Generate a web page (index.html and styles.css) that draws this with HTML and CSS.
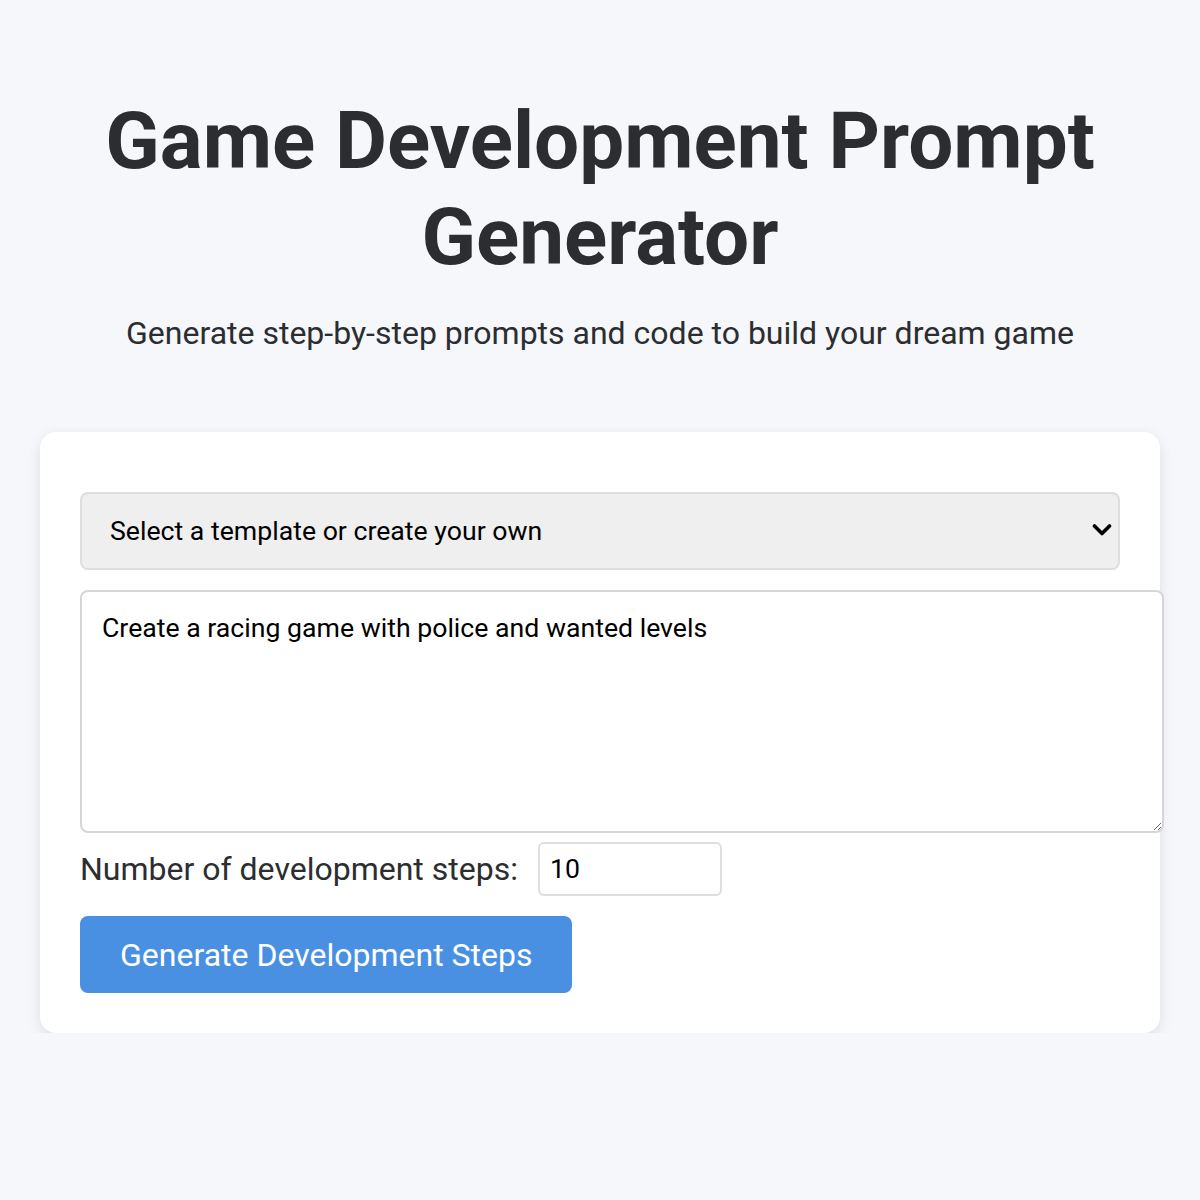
FILE: index.html
```html
<!DOCTYPE html>
<html lang="en">
<head>
<meta charset="UTF-8" />
<meta name="viewport" content="width=device-width, initial-scale=1" />
<title>Game Development Prompt Generator</title>
<link rel="stylesheet" href="styles.css">
</head>
<body>
  <div class="container">
    <header class="header">
      <h1>Game Development Prompt Generator</h1>
      <p class="subtitle">Generate step-by-step prompts and code to build your dream game</p>
    </header>

    <div class="card">
      <div class="select-wrap">
        <select id="templateSelect" class="template-select">
          <option value="">Select a template or create your own</option>
          <option value="racing">Racing game</option>
          <option value="platformer">Platformer</option>
          <option value="rpg">RPG</option>
        </select>
        <!-- dropdown arrow -->
        <svg class="select-arrow" width="20" height="14" viewBox="0 0 20 14">
          <path d="M2.5 3 L10 10.5 L17.5 3" fill="none" stroke="#000" stroke-width="3.6" stroke-linecap="round" stroke-linejoin="round" />
        </svg>
      </div>

      <textarea id="gameIdea" class="game-idea">Create a racing game with police and wanted levels</textarea>

      <div class="steps-row">
        <label for="stepCount">Number of development steps:</label>
        <input type="number" id="stepCount" value="10" min="1" max="50" />
      </div>

      <button id="generateBtn" class="generate-btn">Generate Development Steps</button>
    </div>
  </div>
</body>
</html>
```

FILE: styles.css
```css
body, html {
  margin: 0; padding: 0;
  font-family: Roboto, "Liberation Sans", sans-serif;
  background: #f5f7fb;
  color: #2c2d30;
}
.container {
  padding: 0 40px;
}
.header {
  text-align: center;
  padding-top: 93px;
  margin-bottom: 80px;
}
.header h1 {
  margin: 0;
  font-size: 80px;
  line-height: 96px;
  font-weight: 700;
  color: #2c2d30;
}
.subtitle {
  margin: 29px 0 0;
  font-size: 32px;
  color: #2c2d30;
}
.card {
  background: white;
  border-radius: 16px;
  padding: 60px 40px 40px 40px;
  box-shadow: 0 4px 14px rgba(0, 0, 0, 0.1);
}
.select-wrap {
  position: relative;
  margin-bottom: 20px;
}
.template-select {
  display: block;
  width: 100%;
  height: 78px;
  padding: 0 60px 0 28px;
  font-family: Roboto, "Liberation Sans", sans-serif;
  font-size: 26.67px;
  color: #000;
  background: #efefef;
  border: 2px solid #dedede;
  border-radius: 8px;
  box-sizing: border-box;
  appearance: none;
  -webkit-appearance: none;
}
.select-arrow {
  position: absolute;
  right: 8px;
  top: 31px;
  pointer-events: none;
}
.game-idea {
  display: block;
  width: 100%;
  height: 199px;
  padding: 20px;
  font-family: Roboto, "Liberation Sans", sans-serif;
  font-size: 26.67px;
  color: #000;
  border: 2px solid #d6d6d6;
  border-radius: 8px;
  resize: vertical;
}
.steps-row {
  display: flex;
  align-items: center;
  gap: 20px;
  margin: 9px 0 20px;
}
.steps-row label {
  font-size: 32px;
  color: #2c2d30;
}
.steps-row input {
  width: 184px;
  height: 54px;
  padding: 0 10px;
  font-family: Roboto, "Liberation Sans", sans-serif;
  font-size: 26.67px;
  border: 2px solid #dedede;
  border-radius: 6px;
  box-sizing: border-box;
}
.generate-btn {
  display: block;
  padding: 0 40px;
  height: 77px;
  background-color: #4a90e2;
  border: none;
  border-radius: 8px;
  color: white;
  font-family: Roboto, "Liberation Sans", sans-serif;
  font-size: 32px;
  cursor: pointer;
}
```
